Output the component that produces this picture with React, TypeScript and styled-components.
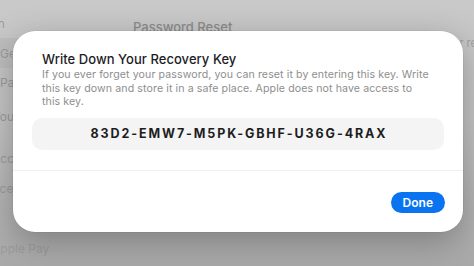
import React from "react";
import styled, { createGlobalStyle } from "styled-components";

const GlobalStyle = createGlobalStyle`
  html, body { margin: 0; padding: 0; }
  body {
    width: 474px;
    height: 266px;
    overflow: hidden;
    font-family: Inter, "Noto Sans", "Liberation Sans", sans-serif;
    -webkit-font-smoothing: antialiased;
  }
`;

const Page = styled.div`
  position: relative;
  width: 474px;
  height: 266px;
  overflow: hidden;
  display: flex;
  background: linear-gradient(180deg, #c9c9c9 0%, #c4c4c4 45%, #a9a9a9 100%);
`;

const Sidebar = styled.nav`
  width: 120px;
  flex-shrink: 0;
  display: flex;
  flex-direction: column;
  padding-top: 8px;
  overflow: hidden;
`;

const SideItem = styled.div<{ $mt: number; $active?: boolean }>`
  height: 30px;
  margin-top: ${(p) => p.$mt}px;
  display: flex;
  align-items: center;
  font-size: 12px;
  color: #9c9c9c;
  white-space: nowrap;
  background: ${(p) => (p.$active ? "#bebebe" : "transparent")};
`;

const SideLabel = styled.span<{ $shift: number }>`
  margin-left: ${(p) => p.$shift}px;
`;

const Main = styled.main`
  flex: 1;
  display: flex;
  flex-direction: column;
  padding: 19px 0 0 13px;
`;

const MainTitle = styled.div`
  font-size: 13px;
  font-weight: 500;
  color: #8c8c8c;
  line-height: 16px;
`;

const MainLine = styled.div`
  display: flex;
  justify-content: flex-end;
  margin-top: 1px;
  margin-right: -3px;
  font-size: 11px;
  color: #a0a0a0;
  white-space: nowrap;
  line-height: 14px;
`;

const Dialog = styled.div`
  position: absolute;
  left: 13px;
  top: 31px;
  width: 450px;
  height: 201px;
  background: #ffffff;
  border-radius: 22px;
  box-shadow: 0 10px 34px rgba(0, 0, 0, 0.28), 0 0 0 0.5px rgba(0, 0, 0, 0.08);
  display: flex;
  flex-direction: column;
  overflow: hidden;
`;

const Body = styled.div`
  display: flex;
  flex-direction: column;
  padding: 20px 19px 0 19px;
  height: 139px;
  box-sizing: border-box;
`;

const Title = styled.h2`
  margin: 0 0 0 10px;
  font-size: 13px;
  font-weight: 500;
  color: #1d1d1f;
  line-height: 16px;
  letter-spacing: 0.05px;
`;

const Desc = styled.p`
  margin: 1px 0 0 10px;
  width: 388px;
  font-size: 10.6px;
  line-height: 13.5px;
  color: #8e8e8e;
  letter-spacing: 0.1px;
`;

const KeyBox = styled.div`
  margin-top: 9px;
  height: 32px;
  border-radius: 10px;
  background: #f4f4f4;
  display: flex;
  align-items: center;
  justify-content: center;
  font-size: 12.5px;
  font-weight: 700;
  letter-spacing: 1.9px;
  color: #1d1d1f;
  padding-left: 2px;
`;

const Divider = styled.div`
  height: 1px;
  background: #efefef;
`;

const Footer = styled.div`
  flex: 1;
  display: flex;
  justify-content: flex-end;
  align-items: flex-start;
  padding: 21px 18px 0 0;
`;

const Button = styled.button`
  height: 21px;
  min-width: 53px;
  padding: 0 12px;
  border: none;
  border-radius: 11px;
  background: #0a74f0;
  color: #ffffff;
  font-family: inherit;
  font-size: 12px;
  font-weight: 600;
  line-height: 21px;
`;

const sideItems = [
  { label: "Sign In", mt: 0, shift: -34 },
  { label: "General", mt: 0, shift: 0, active: true },
  { label: "Passwords", mt: -1, shift: 0 },
  { label: "Touch ID", mt: 4, shift: -7 },
  { label: "Accounts", mt: 12, shift: -8 },
  { label: "Face ID", mt: 0, shift: -14 },
  { label: "Apple Pay", mt: 30, shift: -8 },
];

export default function App() {
  return (
    <>
      <GlobalStyle />
      <Page>
        <Sidebar>
          {sideItems.map((it) => (
            <SideItem key={it.label} $mt={it.mt} $active={it.active}>
              <SideLabel $shift={it.shift}>{it.label}</SideLabel>
            </SideItem>
          ))}
        </Sidebar>
        <Main>
          <MainTitle>Password Reset</MainTitle>
          <MainLine>You can use your recovery key for re</MainLine>
        </Main>
        <Dialog role="dialog">
          <Body>
            <Title>Write Down Your Recovery Key</Title>
            <Desc>
              If you ever forget your password, you can reset it by entering this key. Write
              this key down and store it in a safe place. Apple does not have access to this
              key.
            </Desc>
            <KeyBox>83D2-EMW7-M5PK-GBHF-U36G-4RAX</KeyBox>
          </Body>
          <Divider />
          <Footer>
            <Button>Done</Button>
          </Footer>
        </Dialog>
      </Page>
    </>
  );
}
